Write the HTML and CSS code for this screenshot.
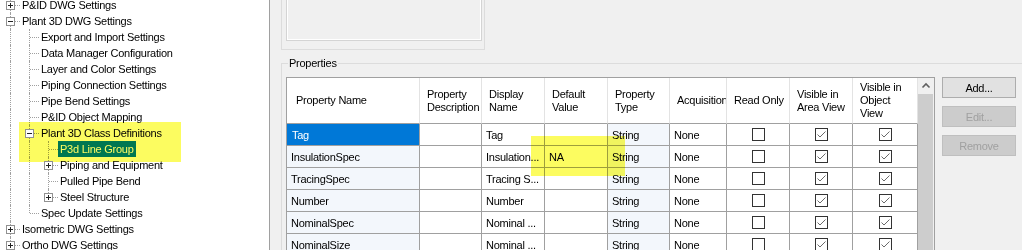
FILE: index.html
```html
<!DOCTYPE html>
<html>
<head>
<meta charset="utf-8">
<link rel="stylesheet" href="styles.css">
</head>
<body>
<div class="app">
  <div class="tree">
    <div class="rows">
      <div class="row"><span class="c tee"><i class="box plus"></i></span><span class="lbl">P&amp;ID DWG Settings</span></div>
      <div class="row"><span class="c tee"><i class="box minus"></i></span><span class="lbl">Plant 3D DWG Settings</span></div>
      <div class="row"><span class="c v"></span><span class="c tee"></span><span class="lbl">Export and Import Settings</span></div>
      <div class="row"><span class="c v"></span><span class="c tee"></span><span class="lbl">Data Manager Configuration</span></div>
      <div class="row"><span class="c v"></span><span class="c tee"></span><span class="lbl">Layer and Color Settings</span></div>
      <div class="row"><span class="c v"></span><span class="c tee"></span><span class="lbl">Piping Connection Settings</span></div>
      <div class="row"><span class="c v"></span><span class="c tee"></span><span class="lbl">Pipe Bend Settings</span></div>
      <div class="row"><span class="c v"></span><span class="c tee"></span><span class="lbl">P&amp;ID Object Mapping</span></div>
      <div class="row"><span class="c v"></span><span class="c tee"><i class="box minus"></i></span><span class="lbl">Plant 3D Class Definitions</span></div>
      <div class="row"><span class="c v"></span><span class="c v"></span><span class="c tee"></span><span class="lbl sel">P3d Line Group</span></div>
      <div class="row"><span class="c v"></span><span class="c v"></span><span class="c tee"><i class="box plus"></i></span><span class="lbl">Piping and Equipment</span></div>
      <div class="row"><span class="c v"></span><span class="c v"></span><span class="c tee"></span><span class="lbl">Pulled Pipe Bend</span></div>
      <div class="row"><span class="c v"></span><span class="c v"></span><span class="c ell"><i class="box plus"></i></span><span class="lbl">Steel Structure</span></div>
      <div class="row"><span class="c v"></span><span class="c ell"></span><span class="lbl">Spec Update Settings</span></div>
      <div class="row"><span class="c tee"><i class="box plus"></i></span><span class="lbl">Isometric DWG Settings</span></div>
      <div class="row"><span class="c tee"><i class="box plus"></i></span><span class="lbl">Ortho DWG Settings</span></div>
    </div>
  </div>

  <div class="panel">
    <div class="topgroup"><div class="topinner"></div></div>

    <div class="propgroup">
      <div class="legend">Properties</div>
      <div class="propbody">
        <div class="grid">
          <div class="cells">
            <div class="h first">Property Name</div>
            <div class="h">Property<br>Description</div>
            <div class="h">Display<br>Name</div>
            <div class="h">Default<br>Value</div>
            <div class="h">Property<br>Type</div>
            <div class="h">Acquisition</div>
            <div class="h">Read Only</div>
            <div class="h">Visible in<br>Area View</div>
            <div class="h">Visible in<br>Object<br>View</div>

            <div class="d selcell">Tag</div><div class="d"></div><div class="d">Tag</div><div class="d"></div><div class="d ro">String</div><div class="d">None</div>
            <div class="d ck"><svg class="cb" viewBox="0 0 13 13"><rect x="0.5" y="0.5" width="12" height="12"/></svg></div>
            <div class="d ck"><svg class="cb" viewBox="0 0 13 13"><rect x="0.5" y="0.5" width="12" height="12"/><polyline points="2.5,6.5 5,9 10.5,3.5"/></svg></div>
            <div class="d ck"><svg class="cb" viewBox="0 0 13 13"><rect x="0.5" y="0.5" width="12" height="12"/><polyline points="2.5,6.5 5,9 10.5,3.5"/></svg></div>

            <div class="d ro">InsulationSpec</div><div class="d"></div><div class="d">Insulation...</div><div class="d">NA</div><div class="d ro">String</div><div class="d">None</div>
            <div class="d ck"><svg class="cb" viewBox="0 0 13 13"><rect x="0.5" y="0.5" width="12" height="12"/></svg></div>
            <div class="d ck"><svg class="cb" viewBox="0 0 13 13"><rect x="0.5" y="0.5" width="12" height="12"/><polyline points="2.5,6.5 5,9 10.5,3.5"/></svg></div>
            <div class="d ck"><svg class="cb" viewBox="0 0 13 13"><rect x="0.5" y="0.5" width="12" height="12"/><polyline points="2.5,6.5 5,9 10.5,3.5"/></svg></div>

            <div class="d ro">TracingSpec</div><div class="d"></div><div class="d">Tracing S...</div><div class="d"></div><div class="d ro">String</div><div class="d">None</div>
            <div class="d ck"><svg class="cb" viewBox="0 0 13 13"><rect x="0.5" y="0.5" width="12" height="12"/></svg></div>
            <div class="d ck"><svg class="cb" viewBox="0 0 13 13"><rect x="0.5" y="0.5" width="12" height="12"/><polyline points="2.5,6.5 5,9 10.5,3.5"/></svg></div>
            <div class="d ck"><svg class="cb" viewBox="0 0 13 13"><rect x="0.5" y="0.5" width="12" height="12"/><polyline points="2.5,6.5 5,9 10.5,3.5"/></svg></div>

            <div class="d ro">Number</div><div class="d"></div><div class="d">Number</div><div class="d"></div><div class="d ro">String</div><div class="d">None</div>
            <div class="d ck"><svg class="cb" viewBox="0 0 13 13"><rect x="0.5" y="0.5" width="12" height="12"/></svg></div>
            <div class="d ck"><svg class="cb" viewBox="0 0 13 13"><rect x="0.5" y="0.5" width="12" height="12"/><polyline points="2.5,6.5 5,9 10.5,3.5"/></svg></div>
            <div class="d ck"><svg class="cb" viewBox="0 0 13 13"><rect x="0.5" y="0.5" width="12" height="12"/><polyline points="2.5,6.5 5,9 10.5,3.5"/></svg></div>

            <div class="d ro">NominalSpec</div><div class="d"></div><div class="d">Nominal ...</div><div class="d"></div><div class="d ro">String</div><div class="d">None</div>
            <div class="d ck"><svg class="cb" viewBox="0 0 13 13"><rect x="0.5" y="0.5" width="12" height="12"/></svg></div>
            <div class="d ck"><svg class="cb" viewBox="0 0 13 13"><rect x="0.5" y="0.5" width="12" height="12"/><polyline points="2.5,6.5 5,9 10.5,3.5"/></svg></div>
            <div class="d ck"><svg class="cb" viewBox="0 0 13 13"><rect x="0.5" y="0.5" width="12" height="12"/><polyline points="2.5,6.5 5,9 10.5,3.5"/></svg></div>

            <div class="d ro">NominalSize</div><div class="d"></div><div class="d">Nominal ...</div><div class="d"></div><div class="d ro">String</div><div class="d">None</div>
            <div class="d ck"><svg class="cb" viewBox="0 0 13 13"><rect x="0.5" y="0.5" width="12" height="12"/></svg></div>
            <div class="d ck"><svg class="cb" viewBox="0 0 13 13"><rect x="0.5" y="0.5" width="12" height="12"/><polyline points="2.5,6.5 5,9 10.5,3.5"/></svg></div>
            <div class="d ck"><svg class="cb" viewBox="0 0 13 13"><rect x="0.5" y="0.5" width="12" height="12"/><polyline points="2.5,6.5 5,9 10.5,3.5"/></svg></div>
          </div>
          <div class="vscroll">
            <div class="up"><svg viewBox="0 0 16 16"><polyline points="4.5,9.5 8,6 11.5,9.5"/></svg></div>
            <div class="thumb"></div>
          </div>
        </div>
        <div class="buttons">
          <div class="btn">Add...</div>
          <div class="btn off">Edit...</div>
          <div class="btn off">Remove</div>
        </div>
      </div>
    </div>
  </div>
</div>
<div class="hl hl-tree"></div>
<div class="hl hl-grid"></div>
</body>
</html>
```

FILE: styles.css
```css
html, body {
  margin: 0;
  padding: 0;
}
body {
  position: relative;
  width: 1022px;
  height: 250px;
  overflow: hidden;
  font-family: "Liberation Sans", Arial, sans-serif;
  font-size: 11px;
  letter-spacing: -0.25px;
  color: #000;
  background: #f0f0f0;
}
.app {
  display: flex;
  width: 1022px;
  height: 250px;
}

/* ---------- tree ---------- */
.tree {
  width: 269px;
  flex: none;
  background: #fff;
  border-right: 1px solid #a0a0a0;
  overflow: hidden;
}
.rows {
  margin-top: -3px;
  padding-left: 1px;
}
.row {
  display: flex;
  height: 16px;
  white-space: nowrap;
}
.c {
  position: relative;
  width: 19px;
  height: 16px;
  flex: none;
}
.c.v::before,
.c.tee::before,
.c.ell::before {
  content: "";
  position: absolute;
  left: 9px;
  top: 0;
  height: 16px;
  border-left: 1px dotted #a0a0a0;
}
.c.ell::before {
  height: 8px;
}
.c.tee::after,
.c.ell::after {
  content: "";
  position: absolute;
  left: 10px;
  top: 8px;
  width: 9px;
  border-top: 1px dotted #a0a0a0;
}
.box {
  position: absolute;
  z-index: 1;
  left: 5px;
  top: 4px;
  width: 9px;
  height: 9px;
  box-sizing: border-box;
  border: 1px solid #919191;
  background: #fff;
}
.box::before {
  content: "";
  position: absolute;
  left: 1px;
  top: 3px;
  width: 5px;
  height: 1px;
  background: #222;
}
.box.plus::after {
  content: "";
  position: absolute;
  left: 3px;
  top: 1px;
  width: 1px;
  height: 5px;
  background: #222;
}
.lbl {
  height: 16px;
  line-height: 16px;
  padding: 0 2px;
}
.lbl.sel {
  background: #0078d7;
  color: #fff;
}

/* ---------- right panel ---------- */
.panel {
  flex: 1;
  min-width: 0;
  background: #f0f0f0;
  overflow: hidden;
}
.topgroup {
  margin-left: 11px;
  width: 204px;
  height: 50px;
  box-sizing: border-box;
  border: 1px solid #dcdcdc;
  border-top: none;
}
.topinner {
  margin-left: 4px;
  width: 196px;
  height: 41px;
  box-sizing: border-box;
  border: 1px solid #d4d4d4;
  border-top: none;
  box-shadow: inset 1px 0 #fff, inset -1px 0 #fff, inset 0 -1px #fff;
}
.propgroup {
  margin-top: 13px;
  margin-left: 11px;
  width: 820px;
  height: 220px;
  border: 1px solid #dcdcdc;
  padding-left: 4px;
}
.legend {
  width: max-content;
  margin-top: -7px;
  margin-left: 2px;
  padding: 0 1px;
  line-height: 13px;
  background: #f0f0f0;
}
.propbody {
  display: flex;
  align-items: flex-start;
  margin-top: 7px;
}

/* ---------- grid ---------- */
.grid {
  display: flex;
  border: 1px solid #a0a0a0;
  background: #fff;
}
.cells {
  display: grid;
  grid-template-columns: 133px 62px 63px 63px 62px 57px 63px 63px 65px;
  grid-template-rows: 46px repeat(6, 22px);
}
.h, .d {
  box-sizing: border-box;
  display: flex;
  align-items: center;
  overflow: hidden;
  white-space: nowrap;
}
.h {
  padding-left: 7px;
  line-height: 13px;
  border-right: 1px solid #e3e3e3;
  border-bottom: 1px solid #a0a0a0;
  background: #fff;
}
.h.first {
  padding-left: 9px;
}
.d {
  padding-left: 4px;
  border-right: 1px solid #a0a0a0;
  border-bottom: 1px solid #a0a0a0;
  background: #fff;
}
.d.ro {
  background: #f3f7fc;
}
.d.selcell {
  background: #0078d7;
  color: #fff;
  padding-left: 5px;
}
.d.ck {
  justify-content: center;
  padding-left: 0;
}
.cb {
  width: 13px;
  height: 13px;
  display: block;
}
.cb rect {
  fill: #fff;
  stroke: #333;
  stroke-width: 1;
}
.cb polyline {
  fill: none;
  stroke: #6a6a6a;
  stroke-width: 1;
}
.vscroll {
  width: 16px;
  background: #f0f0f0;
  display: flex;
  flex-direction: column;
}
.up {
  height: 16px;
}
.up svg {
  display: block;
  width: 16px;
  height: 16px;
}
.up polyline {
  fill: none;
  stroke: #606060;
  stroke-width: 1.6;
}
.thumb {
  flex: 1;
  margin-right: 1px;
  background: #cdcdcd;
}

/* ---------- buttons ---------- */
.buttons {
  margin-left: 7px;
  display: flex;
  flex-direction: column;
  gap: 8px;
}
.btn {
  width: 74px;
  height: 21px;
  box-sizing: border-box;
  border: 1px solid #adadad;
  background: #e1e1e1;
  display: flex;
  align-items: center;
  justify-content: center;
}
.btn.off {
  background: #cccccc;
  border-color: #bfbfbf;
  color: #a0a0a0;
}

/* ---------- highlighter marks ---------- */
.hl {
  position: absolute;
  background: #fcfc60;
  mix-blend-mode: multiply;
  pointer-events: none;
}
.hl-tree {
  left: 19px;
  top: 122px;
  width: 162px;
  height: 40px;
}
.hl-grid {
  left: 531px;
  top: 136px;
  width: 94px;
  height: 40px;
}
```
